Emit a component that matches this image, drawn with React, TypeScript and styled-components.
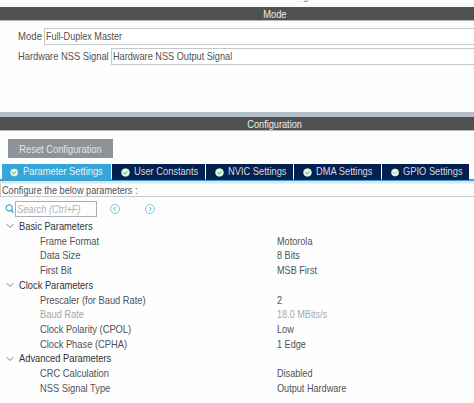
import React from "react";
import styled, { createGlobalStyle } from "styled-components";

const GlobalStyle = createGlobalStyle`
  * { box-sizing: border-box; }
  body {
    margin: 0;
    background: #fefefe;
    overflow: hidden;
    font-family: "Liberation Sans", Arial, sans-serif;
    font-size: 10.3px;
    color: #505254;
  }
`;

const Page = styled.main`
  width: 474px;
  height: 403px;
  display: flex;
  flex-direction: column;
  overflow: hidden;
  white-space: nowrap;
`;

/* Slightly condensed label, as drawn by the desktop toolkit. */
const Text = styled.span<{ $scale?: number; $center?: boolean }>`
  display: inline-block;
  transform: scaleX(${(p) => p.$scale ?? 0.905});
  transform-origin: ${(p) => (p.$center ? "center" : "left")};
`;

const Caption = styled.div`
  height: 7px;
  flex: none;
  overflow: hidden;
  background: #fafcfc;
  padding-left: 303px;
  line-height: 10px;
  color: #777;

  span {
    display: block;
    margin-top: -8px;
  }
`;

const TitleBar = styled.header`
  height: 13px;
  flex: none;
  background: #505251;
  color: #eceeee;
  text-align: center;
  line-height: 15px;
  padding-left: 76px;
  box-shadow: 0 1px 0 #b4b6b6;
`;

const ModePanel = styled.section`
  height: 92px;
  flex: none;
  padding: 8px 0 0 18px;
  display: flex;
  flex-direction: column;
  gap: 3px;
`;

const Field = styled.div<{ $label: number }>`
  display: grid;
  grid-template-columns: ${(p) => p.$label}px 1fr;
  grid-template-rows: 17px;
  height: 17px;
  line-height: 18px;
`;

const Combo = styled.div`
  height: 17px;
  border: 1px solid #c3c8ca;
  border-right: 0;
  line-height: 16px;
  padding-left: 1px;
  background: #fff;
`;

const Splitter = styled.div`
  height: 5px;
  flex: none;
  background: #b5c0c8;
`;

const Actions = styled.div`
  height: 34px;
  flex: none;
  padding: 9px 0 0 8px;
`;

const ResetButton = styled.button`
  display: block;
  width: 105px;
  height: 19px;
  padding: 1px 0 0;
  border: 0;
  background: #8d9399;
  color: #e3e6e8;
  font: inherit;
`;

const Tabs = styled.nav`
  height: 19px;
  flex: none;
  display: flex;
  gap: 1px;
  padding-left: 2px;
  background: linear-gradient(#fefefe 15px, #3c9fd3 15px, #3c9fd3 17px, #d8e8f2 17px);
`;

const Tab = styled.div<{ $width: number; $active?: boolean }>`
  width: ${(p) => p.$width}px;
  height: 16px;
  display: flex;
  align-items: center;
  gap: 4.5px;
  padding-left: ${(p) => (p.$active ? 8 : 8.5)}px;
  line-height: 16px;
  background: ${(p) => (p.$active ? "#35a6d8" : "#04204e")};
  color: ${(p) => (p.$active ? "#e6f5fc" : "#d3dae5")};
`;

const Hint = styled.div`
  height: 14px;
  flex: none;
  border: 1px solid #c8cacb;
  border-top-color: #eef0f1;
  border-right: 0;
  padding-left: 1px;
  line-height: 13px;
`;

const SearchRow = styled.div`
  height: 22px;
  flex: none;
  display: flex;
  align-items: center;
  padding: 1px 0 0 5px;
`;

const SearchBox = styled.div`
  width: 82px;
  height: 16px;
  margin: 0 13px 0 1px;
  border: 1px solid #a9b0b4;
  padding-left: 1px;
  line-height: 15px;
  font-style: italic;
  color: #b0b3b5;
`;

const NavIcon = styled.svg`
  width: 10px;
  height: 10px;
  margin-right: 25px;
`;

const Tree = styled.div`
  display: flex;
  flex-direction: column;
`;

const Row = styled.div<{ $muted?: boolean }>`
  height: 14.73px;
  display: grid;
  grid-template-columns: 237px 1fr;
  padding-left: 40px;
  line-height: 15px;
  color: ${(p) => (p.$muted ? "#a5a7a8" : "#505254")};
`;

const GroupRow = styled.div`
  height: 14.73px;
  display: flex;
  align-items: center;
  gap: 4.5px;
  padding-left: 6px;
  line-height: 15px;
  color: #303234;
`;

const Check = () => (
  <svg width="9" height="9" viewBox="0 0 9 9">
    <circle cx="4.5" cy="4.5" r="4.1" fill="#f4fcf2" />
    <circle cx="4.5" cy="4.5" r="3.7" fill="none" stroke="#b4e2ba" strokeWidth=".6" />
    <path d="M2.4 4.4 4 5.9 6.6 3.3" fill="none" stroke="#5dbb70" strokeWidth="1.1" />
  </svg>
);

const Search = () => (
  <svg width="9" height="9" viewBox="0 0 9 9" fill="none" stroke="#4aa5d4">
    <circle cx="4.2" cy="3.9" r="3" strokeWidth="1.2" />
    <path d="m6.2 6 2.2 2.4" strokeWidth="1.5" />
  </svg>
);

const Arrow = ({ next }: { next?: boolean }) => (
  <NavIcon viewBox="0 0 10 10" fill="none" stroke="#66b4dc">
    <circle cx="5" cy="5" r="4.5" strokeWidth=".8" />
    <path d={next ? "M4.2 2.9 6.3 5 4.2 7.1" : "M5.8 2.9 3.7 5 5.8 7.1"} strokeWidth="1" />
  </NavIcon>
);

const Chevron = () => (
  <svg width="8" height="6" viewBox="0 0 8 6" fill="none" stroke="#6c7072" strokeWidth=".9">
    <path d="M.7 1.2 4 4.5 7.3 1.2" />
  </svg>
);

const tabs = [
  { label: "Parameter Settings", width: 109 },
  { label: "User Constants", width: 93 },
  { label: "NVIC Settings", width: 87 },
  { label: "DMA Settings", width: 87 },
  { label: "GPIO Settings", width: 87 },
];

const groups: { name: string; items: [string, string][] }[] = [
  {
    name: "Basic Parameters",
    items: [["Frame Format", "Motorola"], ["Data Size", "8 Bits"], ["First Bit", "MSB First"]],
  },
  {
    name: "Clock Parameters",
    items: [
      ["Prescaler (for Baud Rate)", "2"],
      ["Baud Rate", "18.0 MBits/s"],
      ["Clock Polarity (CPOL)", "Low"],
      ["Clock Phase (CPHA)", "1 Edge"],
    ],
  },
  {
    name: "Advanced Parameters",
    items: [["CRC Calculation", "Disabled"], ["NSS Signal Type", "Output Hardware"]],
  },
];

export default function App() {
  return (
    <Page>
      <GlobalStyle />
      <Caption><span>g</span></Caption>
      <TitleBar><Text $center>Mode</Text></TitleBar>
      <ModePanel>
        <Field $label={26}><Text $scale={0.93}>Mode</Text><Combo><Text $scale={0.88}>Full-Duplex Master</Text></Combo></Field>
        <Field $label={93}><Text>Hardware NSS Signal</Text><Combo><Text $scale={0.89}>Hardware NSS Output Signal</Text></Combo></Field>
      </ModePanel>
      <Splitter />
      <TitleBar><Text $center $scale={0.89}>Configuration</Text></TitleBar>
      <Actions><ResetButton><Text $center>Reset Configuration</Text></ResetButton></Actions>
      <Tabs>
        {tabs.map((t, i) => (
          <Tab key={t.label} $width={t.width} $active={i === 0}><Check /><Text $scale={0.905}>{t.label}</Text></Tab>
        ))}
      </Tabs>
      <Hint><Text $scale={0.89}>Configure the below parameters :</Text></Hint>
      <SearchRow>
        <Search />
        <SearchBox><Text $scale={0.9}>Search (Ctrl+F)</Text></SearchBox>
        <Arrow />
        <Arrow next />
      </SearchRow>
      <Tree>
        {groups.map((g) => (
          <React.Fragment key={g.name}>
            <GroupRow><Chevron /><Text>{g.name}</Text></GroupRow>
            {g.items.map(([name, value]) => (
              <Row key={name} $muted={name === "Baud Rate"}>
                <Text>{name}</Text>
                <Text $scale={0.885}>{value}</Text>
              </Row>
            ))}
          </React.Fragment>
        ))}
      </Tree>
    </Page>
  );
}
